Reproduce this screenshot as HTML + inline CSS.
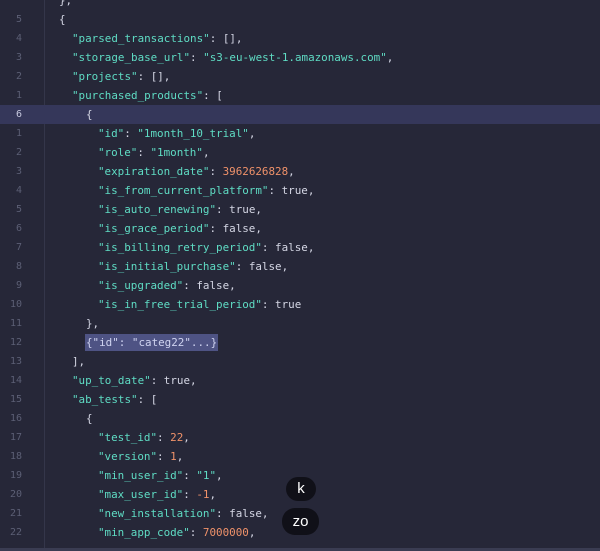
<!DOCTYPE html>
<html><head><style>
body{margin:0;width:600px;height:551px;background:#262738;overflow:hidden;position:relative;font-family:"DejaVu Sans Mono","Liberation Mono",monospace;font-size:10.9px;}
.r{position:absolute;left:0;width:600px;height:19px;line-height:19px;white-space:pre;color:#d4d6e4}
.n{position:absolute;left:0;width:22px;text-align:right;color:#5c5f75;font-size:10px}
.c{position:absolute}
.k{color:#5fdcc4}.s{color:#5fdcc4}.o{color:#f0926a}.b{color:#d4d6e4}
.hl{background:#35375a}
.g{position:absolute;left:44px;top:0;width:1px;height:551px;background:#34364a}
.sel{background:#4e5384;color:#cfd3f0;padding:2px 1px}
.bub{position:absolute;background:#101018;color:#fff;font-family:"Liberation Sans",sans-serif;font-size:15px;text-align:center;border-radius:13px}
.bot{position:absolute;left:0;top:548px;width:600px;height:3px;background:#3a3c52}
</style></head><body>
<div class="g"></div>
<div class="r" style="top:-9px"><span class="n">  </span><span class="c" style="left:59px">},</span></div>
<div class="r" style="top:10px"><span class="n">5</span><span class="c" style="left:59px">{</span></div>
<div class="r" style="top:29px"><span class="n">4</span><span class="c" style="left:72px"><span class="k">"parsed_transactions"</span>: [],</span></div>
<div class="r" style="top:48px"><span class="n">3</span><span class="c" style="left:72px"><span class="k">"storage_base_url"</span>: <span class="s">"s3-eu-west-1.amazonaws.com"</span>,</span></div>
<div class="r" style="top:67px"><span class="n">2</span><span class="c" style="left:72px"><span class="k">"projects"</span>: [],</span></div>
<div class="r" style="top:86px"><span class="n">1</span><span class="c" style="left:72px"><span class="k">"purchased_products"</span>: [</span></div>
<div class="r hl" style="top:105px"><span class="n" style="color:#c8cae0">6</span><span class="c" style="left:86px">{</span></div>
<div class="r" style="top:124px"><span class="n">1</span><span class="c" style="left:98px"><span class="k">"id"</span>: <span class="s">"1month_10_trial"</span>,</span></div>
<div class="r" style="top:143px"><span class="n">2</span><span class="c" style="left:98px"><span class="k">"role"</span>: <span class="s">"1month"</span>,</span></div>
<div class="r" style="top:162px"><span class="n">3</span><span class="c" style="left:98px"><span class="k">"expiration_date"</span>: <span class="o">3962626828</span>,</span></div>
<div class="r" style="top:181px"><span class="n">4</span><span class="c" style="left:98px"><span class="k">"is_from_current_platform"</span>: true,</span></div>
<div class="r" style="top:200px"><span class="n">5</span><span class="c" style="left:98px"><span class="k">"is_auto_renewing"</span>: true,</span></div>
<div class="r" style="top:219px"><span class="n">6</span><span class="c" style="left:98px"><span class="k">"is_grace_period"</span>: false,</span></div>
<div class="r" style="top:238px"><span class="n">7</span><span class="c" style="left:98px"><span class="k">"is_billing_retry_period"</span>: false,</span></div>
<div class="r" style="top:257px"><span class="n">8</span><span class="c" style="left:98px"><span class="k">"is_initial_purchase"</span>: false,</span></div>
<div class="r" style="top:276px"><span class="n">9</span><span class="c" style="left:98px"><span class="k">"is_upgraded"</span>: false,</span></div>
<div class="r" style="top:295px"><span class="n">10</span><span class="c" style="left:98px"><span class="k">"is_in_free_trial_period"</span>: true</span></div>
<div class="r" style="top:314px"><span class="n">11</span><span class="c" style="left:86px">},</span></div>
<div class="r" style="top:333px"><span class="n">12</span><span class="c" style="left:85px"><span class="sel">{"id": "categ22"...}</span></span></div>
<div class="r" style="top:352px"><span class="n">13</span><span class="c" style="left:72px">],</span></div>
<div class="r" style="top:371px"><span class="n">14</span><span class="c" style="left:72px"><span class="k">"up_to_date"</span>: true,</span></div>
<div class="r" style="top:390px"><span class="n">15</span><span class="c" style="left:72px"><span class="k">"ab_tests"</span>: [</span></div>
<div class="r" style="top:409px"><span class="n">16</span><span class="c" style="left:86px">{</span></div>
<div class="r" style="top:428px"><span class="n">17</span><span class="c" style="left:98px"><span class="k">"test_id"</span>: <span class="o">22</span>,</span></div>
<div class="r" style="top:447px"><span class="n">18</span><span class="c" style="left:98px"><span class="k">"version"</span>: <span class="o">1</span>,</span></div>
<div class="r" style="top:466px"><span class="n">19</span><span class="c" style="left:98px"><span class="k">"min_user_id"</span>: <span class="s">"1"</span>,</span></div>
<div class="r" style="top:485px"><span class="n">20</span><span class="c" style="left:98px"><span class="k">"max_user_id"</span>: <span class="o">-1</span>,</span></div>
<div class="r" style="top:504px"><span class="n">21</span><span class="c" style="left:98px"><span class="k">"new_installation"</span>: false,</span></div>
<div class="r" style="top:523px"><span class="n">22</span><span class="c" style="left:98px"><span class="k">"min_app_code"</span>: <span class="o">7000000</span>,</span></div>
<div class="bub" style="left:286px;top:477px;width:30px;height:24px;line-height:24px">k</div>
<div class="bub" style="left:282px;top:508px;width:37px;height:27px;line-height:27px">zo</div>
<div class="bot"></div>
</body></html>
